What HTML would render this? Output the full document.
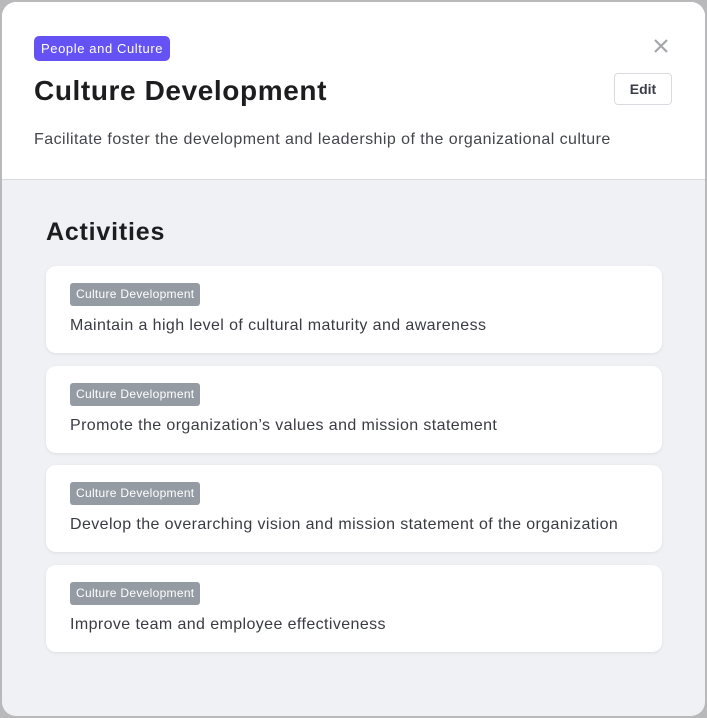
<!DOCTYPE html>
<html><head><style>
body{margin:0;width:707px;height:718px;background:#b9b9bb;font-family:"Liberation Sans",sans-serif;overflow:hidden;position:relative}
.modal{position:absolute;left:2px;top:2px;width:703px;height:714px;background:#f0f1f5;border-radius:14px;overflow:hidden}
.head{background:#fff;height:177px;border-bottom:1px solid #d9dade;position:relative}
.pill{position:absolute;left:32px;top:34px;height:25px;line-height:25px;padding:0 7px;background:#6452f5;color:#fff;font-size:13px;border-radius:5px;letter-spacing:0.6px}
h1{position:absolute;left:32px;top:73px;margin:0;font-size:28px;font-weight:bold;color:#1d1d1f;letter-spacing:0.6px}
.desc{position:absolute;left:32px;top:129px;font-size:16px;color:#44454d;letter-spacing:0.45px}
.edit{position:absolute;left:612px;top:71px;width:58px;height:32px;border:1px solid #d9dbe0;border-radius:4px;box-sizing:border-box;text-align:center;line-height:30px;font-size:14px;font-weight:bold;color:#3a3c48}
.x{position:absolute;left:650px;top:35px}
h2{position:absolute;left:44px;top:216px;margin:0;font-size:25px;font-weight:bold;color:#1d1d1f;letter-spacing:0.8px}
.card{position:absolute;left:44px;width:616px;height:87px;background:#fff;border-radius:10px;box-shadow:0 1px 3px rgba(0,0,0,.08)}
.tag{position:absolute;left:24px;top:17px;height:23px;line-height:23px;padding:0 6px;background:#949ba3;color:#fff;font-size:12px;border-radius:3px;letter-spacing:0.3px}
.t{position:absolute;left:24px;top:51px;font-size:16px;color:#3a3b44;letter-spacing:0.4px}
</style></head><body>
<div class="modal">
<div class="head">
<div class="pill">People and Culture</div>
<h1>Culture Development</h1>
<div class="desc">Facilitate foster the development and leadership of the organizational culture</div>
<div class="edit">Edit</div>
<svg class="x" width="18" height="18" viewBox="0 0 18 18"><path d="M3 3L15 15M15 3L3 15" stroke="#a5a6ab" stroke-width="2.2"/></svg>
</div>
<h2>Activities</h2>
<div class="card" style="top:264px"><div class="tag">Culture Development</div><div class="t">Maintain a high level of cultural maturity and awareness</div></div>
<div class="card" style="top:364px"><div class="tag">Culture Development</div><div class="t">Promote the organization’s values and mission statement</div></div>
<div class="card" style="top:463px"><div class="tag">Culture Development</div><div class="t">Develop the overarching vision and mission statement of the organization</div></div>
<div class="card" style="top:563px"><div class="tag">Culture Development</div><div class="t">Improve team and employee effectiveness</div></div>
</div>
</body></html>
